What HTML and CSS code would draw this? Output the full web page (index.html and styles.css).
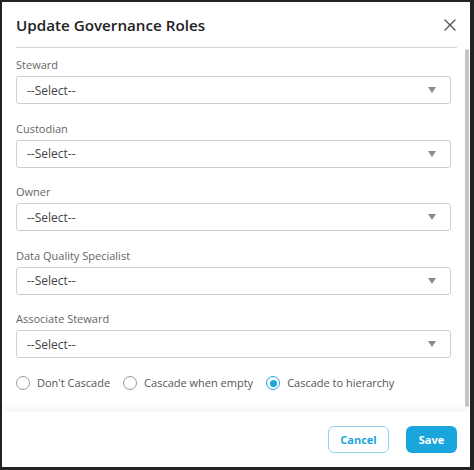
FILE: index.html
```html
<!DOCTYPE html>
<html lang="en">
<head>
<meta charset="utf-8">
<title>Update Governance Roles</title>
<link rel="stylesheet" href="styles.css">
</head>
<body>
<div class="modal">
  <div class="modal-header">
    <h1 class="modal-title">Update Governance Roles</h1>
    <button class="close-btn" aria-label="Close">
      <svg width="12" height="12" viewBox="0 0 12 12"><path d="M1 1L11 11M11 1L1 11" stroke="#555" stroke-width="1.4" fill="none" stroke-linecap="round"/></svg>
    </button>
  </div>
  <div class="modal-body">
    <div class="body-content">
      <div class="field">
        <div class="field-label">Steward</div>
        <div class="select"><span>--Select--</span><span class="caret"></span></div>
      </div>
      <div class="field">
        <div class="field-label">Custodian</div>
        <div class="select"><span>--Select--</span><span class="caret"></span></div>
      </div>
      <div class="field">
        <div class="field-label">Owner</div>
        <div class="select"><span>--Select--</span><span class="caret"></span></div>
      </div>
      <div class="field">
        <div class="field-label">Data Quality Specialist</div>
        <div class="select"><span>--Select--</span><span class="caret"></span></div>
      </div>
      <div class="field">
        <div class="field-label">Associate Steward</div>
        <div class="select"><span>--Select--</span><span class="caret"></span></div>
      </div>
      <div class="radios">
        <label class="radio"><span class="circle"></span>Don't Cascade</label>
        <label class="radio"><span class="circle"></span>Cascade when empty</label>
        <label class="radio"><span class="circle checked"></span>Cascade to hierarchy</label>
      </div>
    </div>
    <div class="scrollbar"><div class="thumb"></div></div>
  </div>
  <div class="modal-footer">
    <button class="btn btn-outline">Cancel</button>
    <button class="btn btn-primary">Save</button>
  </div>
</div>
</body>
</html>
```
FILE: styles.css
```css
* { box-sizing: border-box; }
html, body { margin: 0; padding: 0; }
body {
  background: #232323;
  width: 474px;
  height: 470px;
  font-family: "Open Sans", "Noto Sans", sans-serif;
  padding: 2px 4px 3px 2px;
}
.modal {
  background: #fff;
  height: 465px;
  display: flex;
  flex-direction: column;
}
.modal-header {
  display: flex;
  align-items: center;
  justify-content: space-between;
  height: 46px;
  margin: 0 13px 0 14px;
  border-bottom: 1px solid #d6d6d6;
  flex: none;
}
.modal-title {
  margin: 0;
  font-size: 15.2px;
  font-weight: 600;
  color: #222;
  letter-spacing: 0;
}
.close-btn {
  border: 0;
  background: none;
  padding: 0;
  width: 12px;
  height: 12px;
  display: flex;
  margin-right: 1px;
}
.modal-body {
  flex: 1;
  display: flex;
  overflow: hidden;
}
.body-content {
  flex: 1;
  padding: 10px 13px 0 14px;
}
.scrollbar {
  flex: none;
  width: 6px;
  padding: 1px 1px 5px 1px;
  display: flex;
}
.thumb {
  flex: 1;
  background: #c6c6c6;
  border-radius: 3px;
}
.field { margin-bottom: 17.5px; }
.field-label {
  font-size: 11px;
  line-height: 14px;
  color: #666;
  margin-bottom: 4px;
}
.select {
  height: 28px;
  border: 1px solid #cfcfcf;
  border-radius: 3px;
  display: flex;
  align-items: center;
  justify-content: space-between;
  padding: 0 14px 0 10px;
  font-size: 12px;
  color: #444;
}
.caret {
  width: 0;
  height: 0;
  border-left: 4px solid transparent;
  border-right: 4px solid transparent;
  border-top: 6px solid #8a8a8a;
}
.radios {
  display: flex;
  gap: 13px;
  margin-top: 18px;
}
.radio {
  display: flex;
  align-items: center;
  gap: 7px;
  font-size: 11px;
  color: #555;
  line-height: 14px;
}
.circle {
  width: 14px;
  height: 14px;
  border: 1px solid #9a9a9a;
  border-radius: 50%;
  display: flex;
  align-items: center;
  justify-content: center;
}
.circle.checked { border-color: #1aa6dd; }
.circle.checked::after {
  content: "";
  width: 7px;
  height: 7px;
  border-radius: 50%;
  background: #1aa6dd;
}
.modal-footer {
  flex: none;
  height: 55px;
  display: flex;
  align-items: center;
  justify-content: flex-end;
  gap: 17px;
  padding-right: 13px;
  box-shadow: 0 -5px 8px rgba(0,0,0,0.04);
  position: relative;
}
.btn {
  height: 27px;
  border-radius: 6px;
  font-family: inherit;
  font-size: 11px;
  font-weight: 700;
  cursor: pointer;
}
.btn-outline {
  width: 61px;
  border: 1px solid #8fd3ee;
  background: #fff;
  color: #1aa6dd;
}
.btn-primary {
  width: 51px;
  border: 0;
  background: #1aa6dd;
  color: #fff;
}
```
